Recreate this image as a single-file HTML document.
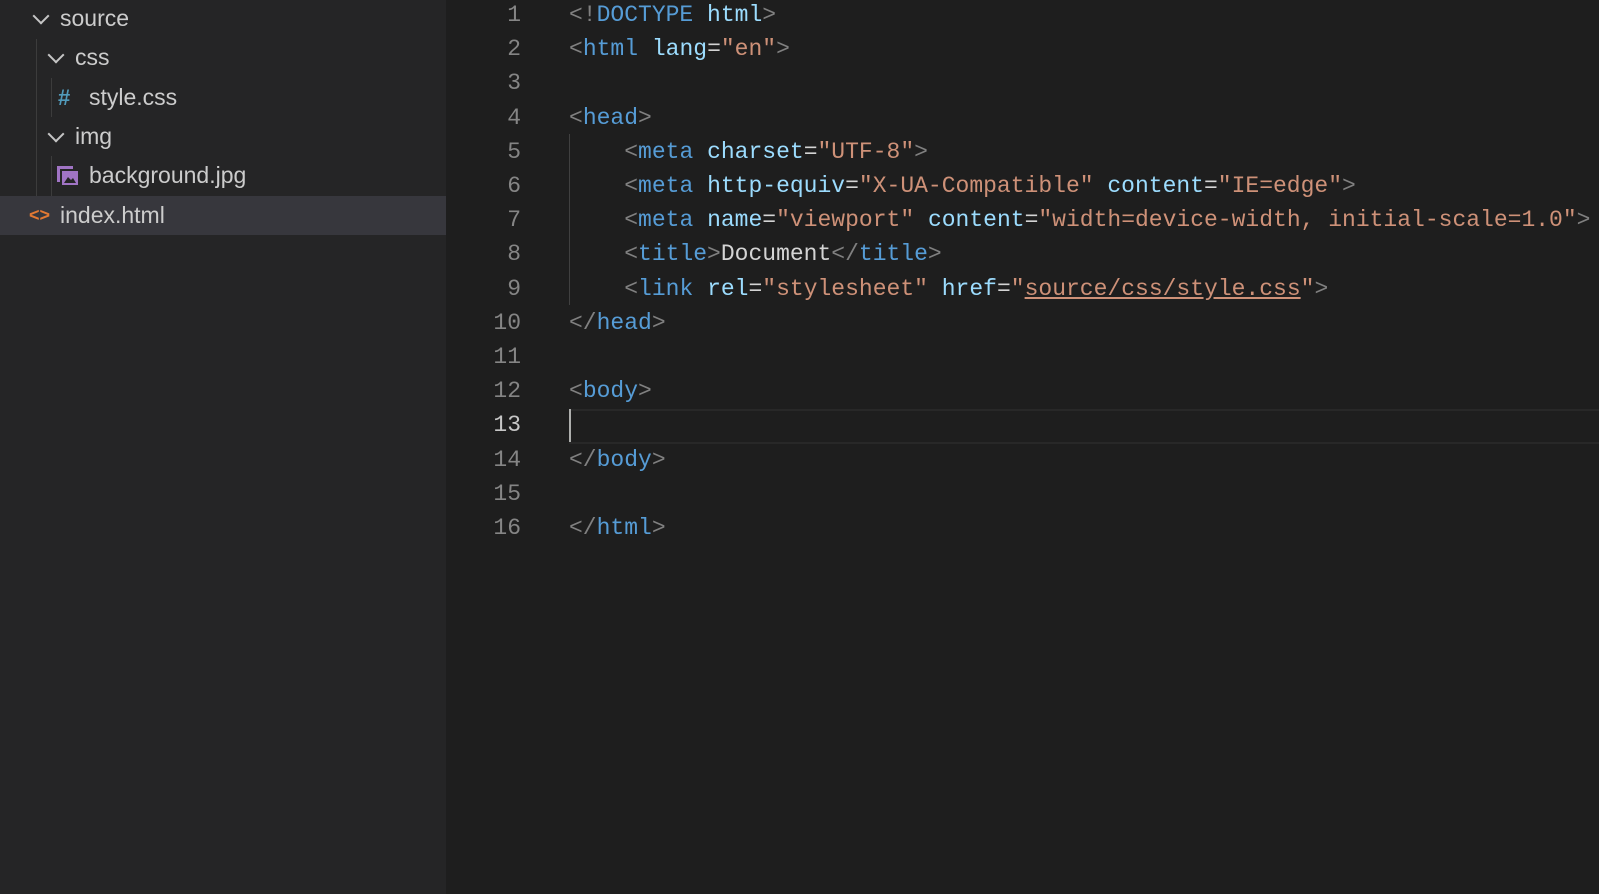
<!DOCTYPE html>
<html><head><style>
html,body{margin:0;padding:0;width:1599px;height:894px;overflow:hidden;background:#1e1e1e}
#side{position:absolute;left:0;top:0;width:446px;height:894px;background:#252526;font-family:"Liberation Sans",sans-serif;font-size:23px;color:#cccccc}
.row{position:absolute;left:0;width:446px;height:39px;line-height:39px}
.sel{background:#37373d}
.chev{position:absolute;width:10px;height:10px;border-right:2px solid #c5c5c5;border-bottom:2px solid #c5c5c5;transform:rotate(45deg)}
.guide{position:absolute;width:1px;background:#3c3c3c}
#ed{position:absolute;left:446px;top:0;right:0;bottom:0;font-family:"Liberation Mono",monospace;font-size:23px}
.ln{position:absolute;left:0;width:75px;text-align:right;color:#858585;height:34.2px;line-height:34.2px}
.cl{position:absolute;left:123px;height:34.2px;line-height:34.2px;white-space:pre;color:#d4d4d4}
.p{color:#808080}.t{color:#569cd6}.a{color:#9cdcfe}.s{color:#ce9178}
</style></head><body>
<div id="side">
<div class="guide" style="left:36px;top:39px;height:157px"></div>
<div class="guide" style="left:51px;top:78px;height:39px"></div>
<div class="guide" style="left:51px;top:156px;height:40px"></div>
<div class="row" style="top:-1px"><div class="chev" style="left:35px;top:11px"></div><span style="position:absolute;left:60px">source</span></div>
<div class="row" style="top:38px"><div class="chev" style="left:50px;top:11px"></div><span style="position:absolute;left:75px">css</span></div>
<div class="row" style="top:78px"><span style="position:absolute;left:58px;color:#519aba;font-weight:bold;font-size:22px">#</span><span style="position:absolute;left:89px">style.css</span></div>
<div class="row" style="top:117px"><div class="chev" style="left:50px;top:11px"></div><span style="position:absolute;left:75px">img</span></div>
<div class="row" style="top:156px"><svg style="position:absolute;left:57px;top:10px" width="22" height="20" viewBox="0 0 22 20"><rect x="0" y="0" width="3" height="16" fill="#a074c4"/><rect x="0" y="0" width="16" height="3" fill="#a074c4"/><rect x="5" y="5" width="16" height="14" fill="#a074c4"/><polygon points="7,17 11,11 14,14 16,12 19,17" fill="#252526"/></svg><span style="position:absolute;left:89px">background.jpg</span></div>
<div class="row sel" style="top:196px"><span style="position:absolute;left:29px;color:#e37933;font-weight:bold;font-size:18px">&lt;&gt;</span><span style="position:absolute;left:60px">index.html</span></div>
</div>
<div id="ed">
<div style="position:absolute;left:123px;top:409px;right:0;height:31px;border-top:2px solid #282828;border-bottom:2px solid #282828"></div>
<div style="position:absolute;left:123px;top:409px;width:2px;height:33px;background:#aeafad"></div>
<div class="guide" style="left:123px;top:134px;height:171px;background:#404040"></div>
<div class="ln" style="top:-2px">1</div><div class="ln" style="top:32.2px">2</div><div class="ln" style="top:66.4px">3</div><div class="ln" style="top:100.6px">4</div><div class="ln" style="top:134.8px">5</div><div class="ln" style="top:169px">6</div><div class="ln" style="top:203.2px">7</div><div class="ln" style="top:237.4px">8</div><div class="ln" style="top:271.6px">9</div><div class="ln" style="top:305.8px">10</div><div class="ln" style="top:340px">11</div><div class="ln" style="top:374.2px">12</div><div class="ln" style="top:408.4px;color:#c6c6c6">13</div><div class="ln" style="top:442.6px">14</div><div class="ln" style="top:476.8px">15</div><div class="ln" style="top:511px">16</div>
<div class="cl" style="top:-2px"><span class="p">&lt;!</span><span class="t">DOCTYPE</span> <span class="a">html</span><span class="p">&gt;</span></div>
<div class="cl" style="top:32.2px"><span class="p">&lt;</span><span class="t">html</span> <span class="a">lang</span>=<span class="s">"en"</span><span class="p">&gt;</span></div>
<div class="cl" style="top:100.6px"><span class="p">&lt;</span><span class="t">head</span><span class="p">&gt;</span></div>
<div class="cl" style="top:134.8px">    <span class="p">&lt;</span><span class="t">meta</span> <span class="a">charset</span>=<span class="s">"UTF-8"</span><span class="p">&gt;</span></div>
<div class="cl" style="top:169px">    <span class="p">&lt;</span><span class="t">meta</span> <span class="a">http-equiv</span>=<span class="s">"X-UA-Compatible"</span> <span class="a">content</span>=<span class="s">"IE=edge"</span><span class="p">&gt;</span></div>
<div class="cl" style="top:203.2px">    <span class="p">&lt;</span><span class="t">meta</span> <span class="a">name</span>=<span class="s">"viewport"</span> <span class="a">content</span>=<span class="s">"width=device-width, initial-scale=1.0"</span><span class="p">&gt;</span></div>
<div class="cl" style="top:237.4px">    <span class="p">&lt;</span><span class="t">title</span><span class="p">&gt;</span>Document<span class="p">&lt;/</span><span class="t">title</span><span class="p">&gt;</span></div>
<div class="cl" style="top:271.6px">    <span class="p">&lt;</span><span class="t">link</span> <span class="a">rel</span>=<span class="s">"stylesheet"</span> <span class="a">href</span>=<span class="s">"<u>source/css/style.css</u>"</span><span class="p">&gt;</span></div>
<div class="cl" style="top:305.8px"><span class="p">&lt;/</span><span class="t">head</span><span class="p">&gt;</span></div>
<div class="cl" style="top:374.2px"><span class="p">&lt;</span><span class="t">body</span><span class="p">&gt;</span></div>
<div class="cl" style="top:442.6px"><span class="p">&lt;/</span><span class="t">body</span><span class="p">&gt;</span></div>
<div class="cl" style="top:511px"><span class="p">&lt;/</span><span class="t">html</span><span class="p">&gt;</span></div>
</div>
</body></html>
